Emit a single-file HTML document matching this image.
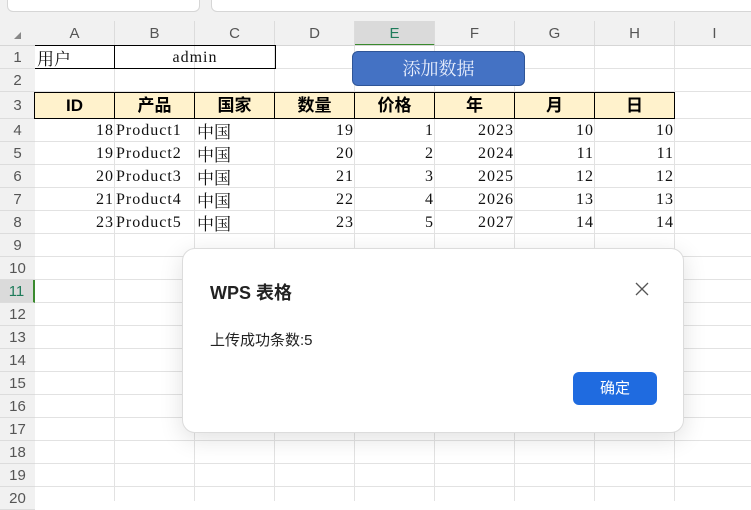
<!DOCTYPE html>
<html><head><meta charset="utf-8">
<style>
*{margin:0;padding:0;box-sizing:border-box}
body{width:751px;height:501px;overflow:hidden;background:#fff;position:relative;font-family:"Liberation Sans","Noto Sans CJK SC",sans-serif}
.top{position:absolute;left:0;top:0;width:751px;height:46px;background:#f1f1f1}
.box{position:absolute;top:-10px;height:22px;background:#fff;border:1px solid #d6d6d6;border-radius:6px}
.ch{position:absolute;top:21px;height:25px;width:80px;text-align:center;line-height:25px;font-size:15px;color:#555;border-right:1px solid #dcdcdc}
.rh{position:absolute;left:0;width:35px;text-align:center;font-size:15px;color:#555;background:#f1f1f1;border-bottom:1px solid #dcdcdc}
.vl{position:absolute;top:46px;bottom:0;width:1px;background:#e2e2e2}
.hl{position:absolute;left:35px;right:0;height:1px;background:#e2e2e2}
.c{position:absolute;height:23px;line-height:23px;font-size:16px;font-family:"Liberation Serif","Noto Serif CJK SC",serif;letter-spacing:1px;color:#111;white-space:nowrap}
.r{text-align:right;width:79px}
.cn{font-family:'Noto Serif CJK SC',serif;font-size:17px;letter-spacing:0}
.hd{position:absolute;top:92px;height:27px;width:81px;background:#fff2cc;border:1px solid #000;text-align:center;line-height:25px;font-weight:bold;font-size:17px;color:#000;font-family:"Liberation Sans","Noto Sans CJK SC",sans-serif}
</style></head><body>
<div class="top">
 <div class="box" style="left:7px;width:193px"></div>
 <div class="box" style="left:211px;width:560px"></div>
 <div style="position:absolute;left:0;top:21px;width:35px;height:25px;"><div style="position:absolute;left:14px;top:11px;width:0;height:0;border-left:7px solid transparent;border-bottom:7px solid #888"></div></div>
</div>
<div class="ch" style="left:35px">A</div>
<div class="ch" style="left:115px">B</div>
<div class="ch" style="left:195px">C</div>
<div class="ch" style="left:275px">D</div>
<div class="ch" style="left:355px;background:#dadada;color:#1e7b5a;border-bottom:2px solid #3a8a2e">E</div>
<div class="ch" style="left:435px">F</div>
<div class="ch" style="left:515px">G</div>
<div class="ch" style="left:595px">H</div>
<div class="ch" style="left:675px">I</div>
<div style="position:absolute;left:0;top:45px;width:751px;height:1px;background:#d6d6d6"></div>

<div class="vl" style="left:114px"></div><div class="vl" style="left:194px"></div><div class="vl" style="left:274px"></div><div class="vl" style="left:354px"></div><div class="vl" style="left:434px"></div><div class="vl" style="left:514px"></div><div class="vl" style="left:594px"></div><div class="vl" style="left:674px"></div>
<div class="hl" style="top:68px"></div><div class="hl" style="top:91px"></div><div class="hl" style="top:118px"></div>
<div class="hl" style="top:141px"></div><div class="hl" style="top:164px"></div><div class="hl" style="top:187px"></div><div class="hl" style="top:210px"></div><div class="hl" style="top:233px"></div><div class="hl" style="top:256px"></div><div class="hl" style="top:279px"></div><div class="hl" style="top:302px"></div><div class="hl" style="top:325px"></div><div class="hl" style="top:348px"></div><div class="hl" style="top:371px"></div><div class="hl" style="top:394px"></div><div class="hl" style="top:417px"></div><div class="hl" style="top:440px"></div><div class="hl" style="top:463px"></div><div class="hl" style="top:486px"></div>

<div class="rh" style="top:46px;height:23px;line-height:23px">1</div>
<div class="rh" style="top:69px;height:23px;line-height:23px">2</div>
<div class="rh" style="top:92px;height:27px;line-height:27px">3</div>
<div class="rh" style="top:119px;height:23px;line-height:23px">4</div>
<div class="rh" style="top:142px;height:23px;line-height:23px">5</div>
<div class="rh" style="top:165px;height:23px;line-height:23px">6</div>
<div class="rh" style="top:188px;height:23px;line-height:23px">7</div>
<div class="rh" style="top:211px;height:23px;line-height:23px">8</div>
<div class="rh" style="top:234px;height:23px;line-height:23px">9</div>
<div class="rh" style="top:257px;height:23px;line-height:23px">10</div>
<div class="rh" style="top:280px;height:23px;line-height:23px;background:#dadada;color:#1e7b5a;border-right:2px solid #3a8a2e">11</div>
<div class="rh" style="top:303px;height:23px;line-height:23px">12</div>
<div class="rh" style="top:326px;height:23px;line-height:23px">13</div>
<div class="rh" style="top:349px;height:23px;line-height:23px">14</div>
<div class="rh" style="top:372px;height:23px;line-height:23px">15</div>
<div class="rh" style="top:395px;height:23px;line-height:23px">16</div>
<div class="rh" style="top:418px;height:23px;line-height:23px">17</div>
<div class="rh" style="top:441px;height:23px;line-height:23px">18</div>
<div class="rh" style="top:464px;height:23px;line-height:23px">19</div>
<div class="rh" style="top:487px;height:23px;line-height:23px">20</div>

<div style="position:absolute;left:35px;top:45px;width:241px;height:24px;border-top:1px solid #000;border-bottom:1px solid #000;border-right:1px solid #000"></div>
<div style="position:absolute;left:114px;top:45px;width:1px;height:24px;background:#000"></div>
<div class="c cn" style="left:37px;top:46px">用户</div>
<div class="c" style="left:115px;top:46px;width:160px;text-align:center">admin</div>

<div style="position:absolute;left:352px;top:51px;width:173px;height:35px;background:#4472c4;border:1px solid #2f5597;border-radius:6px;color:#e8eefc;text-align:center;line-height:33px;font-size:18px;font-family:'Noto Serif CJK SC',serif">添加数据</div>

<div class="hd" style="left:34px">ID</div>
<div class="hd" style="left:114px">产品</div>
<div class="hd" style="left:194px">国家</div>
<div class="hd" style="left:274px">数量</div>
<div class="hd" style="left:354px">价格</div>
<div class="hd" style="left:434px">年</div>
<div class="hd" style="left:514px">月</div>
<div class="hd" style="left:594px">日</div>

<div class="c r" style="left:35px;top:119px">18</div><div class="c" style="left:116px;top:119px">Product1</div><div class="c cn" style="left:197px;top:119px">中国</div><div class="c r" style="left:275px;top:119px">19</div><div class="c r" style="left:355px;top:119px">1</div><div class="c r" style="left:435px;top:119px">2023</div><div class="c r" style="left:515px;top:119px">10</div><div class="c r" style="left:595px;top:119px">10</div>
<div class="c r" style="left:35px;top:142px">19</div><div class="c" style="left:116px;top:142px">Product2</div><div class="c cn" style="left:197px;top:142px">中国</div><div class="c r" style="left:275px;top:142px">20</div><div class="c r" style="left:355px;top:142px">2</div><div class="c r" style="left:435px;top:142px">2024</div><div class="c r" style="left:515px;top:142px">11</div><div class="c r" style="left:595px;top:142px">11</div>
<div class="c r" style="left:35px;top:165px">20</div><div class="c" style="left:116px;top:165px">Product3</div><div class="c cn" style="left:197px;top:165px">中国</div><div class="c r" style="left:275px;top:165px">21</div><div class="c r" style="left:355px;top:165px">3</div><div class="c r" style="left:435px;top:165px">2025</div><div class="c r" style="left:515px;top:165px">12</div><div class="c r" style="left:595px;top:165px">12</div>
<div class="c r" style="left:35px;top:188px">21</div><div class="c" style="left:116px;top:188px">Product4</div><div class="c cn" style="left:197px;top:188px">中国</div><div class="c r" style="left:275px;top:188px">22</div><div class="c r" style="left:355px;top:188px">4</div><div class="c r" style="left:435px;top:188px">2026</div><div class="c r" style="left:515px;top:188px">13</div><div class="c r" style="left:595px;top:188px">13</div>
<div class="c r" style="left:35px;top:211px">23</div><div class="c" style="left:116px;top:211px">Product5</div><div class="c cn" style="left:197px;top:211px">中国</div><div class="c r" style="left:275px;top:211px">23</div><div class="c r" style="left:355px;top:211px">5</div><div class="c r" style="left:435px;top:211px">2027</div><div class="c r" style="left:515px;top:211px">14</div><div class="c r" style="left:595px;top:211px">14</div>

<div style="position:absolute;left:182px;top:248px;width:502px;height:185px;background:#fff;border:1px solid #dcdcdc;border-radius:13px;box-shadow:0 6px 24px rgba(0,0,0,0.12)">
 <div style="position:absolute;left:27px;top:30px;font-size:18px;font-weight:bold;color:#222">WPS 表格</div>
 <svg style="position:absolute;left:452px;top:33px" width="14" height="14" viewBox="0 0 14 14"><path d="M1 1L13 13M13 1L1 13" stroke="#555" stroke-width="1.3"/></svg>
 <div style="position:absolute;left:27px;top:80px;font-size:15px;color:#222">上传成功条数:5</div>
 <div style="position:absolute;left:390px;top:123px;width:84px;height:33px;background:#1f6be0;border-radius:6px;color:#fff;text-align:center;line-height:33px;font-size:15px">确定</div>
</div>
</body></html>
